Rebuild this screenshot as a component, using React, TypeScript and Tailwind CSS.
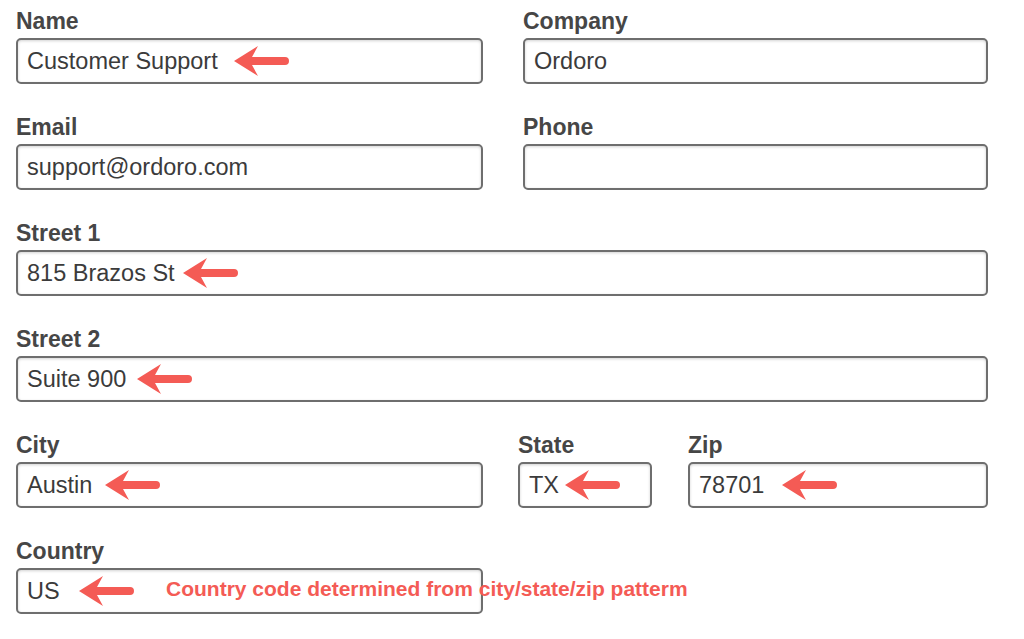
const RED = '#f45b55'

const Arrow: React.FC<{ left: number }> = ({ left }) => (
  <svg
    className="absolute top-1/2 -translate-y-1/2"
    style={{ left }}
    width="56"
    height="30"
    viewBox="0 0 56 30"
  >
    <path
      d="M0 15 L24 0 L18 11 L51 11 A4 4 0 0 1 51 19 L18 19 L24 30 Z"
      fill={RED}
    />
  </svg>
)

const Field: React.FC<{
  label: string
  value?: string
  arrow?: number
  className?: string
  children?: React.ReactNode
}> = ({ label, value, arrow, className = '', children }) => (
  <div className={className}>
    <div className="mb-[5px] h-6 text-[23px] font-bold leading-6 text-[#464646]">{label}</div>
    <div className="relative flex h-[46px] items-center rounded-[5px] border-2 border-[#6e6e6e] bg-white pl-[9px] pt-px text-[23.5px] text-[#3b3b3b] shadow-[inset_0_1px_3px_rgba(0,0,0,0.18)]">
      <span>{value}</span>
      {arrow !== undefined && <Arrow left={arrow} />}
      {children}
    </div>
  </div>
)

export default function App() {
  return (
    <div
      className="min-h-[639px] w-[1024px] bg-white pl-4 pt-[9px]"
      style={{ fontFamily: '"Liberation Sans", Arial, sans-serif' }}
    >
      <div className="flex w-[972px] flex-col gap-y-[31px]">
        <div className="grid grid-cols-[467px_465px] gap-x-10">
          <Field label="Name" value="Customer Support" arrow={216} />
          <Field label="Company" value="Ordoro" />
        </div>
        <div className="grid grid-cols-[467px_465px] gap-x-10">
          <Field label="Email" value="support@ordoro.com" />
          <Field label="Phone" value="" />
        </div>
        <Field label="Street 1" value="815 Brazos St" arrow={165} />
        <Field label="Street 2" value="Suite 900" arrow={119} />
        <div className="flex">
          <Field label="City" value="Austin" arrow={87} className="w-[467px]" />
          <Field label="State" value="TX" arrow={45} className="ml-[35px] w-[134px]" />
          <Field label="Zip" value="78701" arrow={92} className="ml-9 w-[300px]" />
        </div>
        <Field label="Country" value="US" arrow={61} className="w-[467px]">
          <span
            className="absolute left-[148px] top-[calc(50%-2px)] -translate-y-1/2 whitespace-nowrap text-[21px] font-bold"
            style={{ color: RED }}
          >
            Country code determined from city/state/zip patterm
          </span>
        </Field>
      </div>
    </div>
  )
}
